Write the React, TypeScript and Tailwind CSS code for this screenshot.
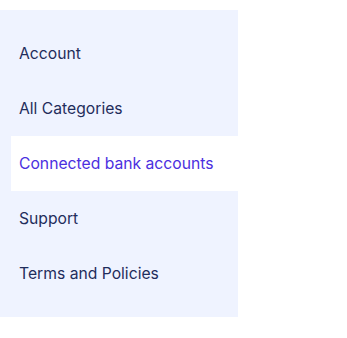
const items = ["Account", "All Categories", "Connected bank accounts", "Support", "Terms and Policies"];

export default function App() {
  const active = "Connected bank accounts";
  return (
    <div className="min-h-screen bg-white pt-[10px]" style={{ fontFamily: "Inter, 'Noto Sans', sans-serif" }}>
      <nav className="w-[238px] bg-[#eff3ff] pl-[11px] py-4">
        {items.map((item) => (
          <a
            key={item}
            href="#"
            className={
              item === active
                ? "flex h-[55px] items-center bg-white pl-2 pt-px text-[15.7px] text-[#4b2fe0]"
                : "flex h-[55px] items-center pl-2 pt-px text-[15.7px] text-[#1f2d5c]"
            }
          >
            {item}
          </a>
        ))}
      </nav>
    </div>
  );
}
